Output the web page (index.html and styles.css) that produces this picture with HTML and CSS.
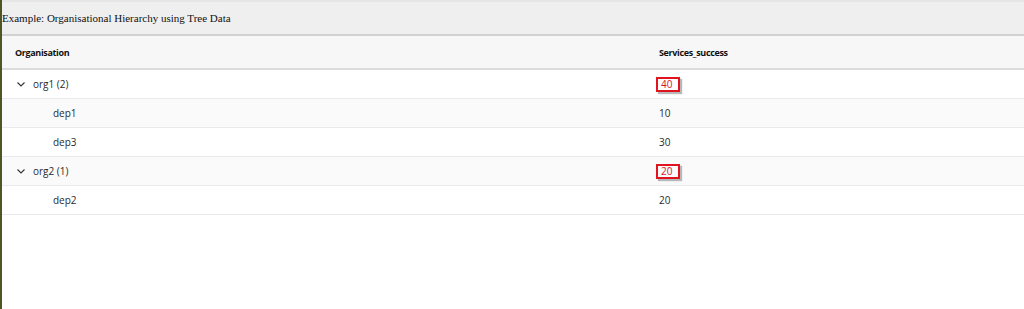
FILE: index.html
```html
<!DOCTYPE html>
<html>
<head>
<meta charset="utf-8">
<link rel="stylesheet" href="styles.css">
</head>
<body>
<div class="page">
  <div class="title">Example: Organisational Hierarchy using Tree Data</div>
  <div class="grid">
    <div class="row head">
      <div class="c1">Organisation</div>
      <div class="c2">Services_success</div>
    </div>
    <div class="row">
      <div class="c1 l0"><span class="chev"><svg width="8" height="5" viewBox="0 0 8 5"><path d="M0.5 0.5 L4 4 L7.5 0.5" fill="none" stroke="#333" stroke-width="1.1"/></svg></span>org1 (2)</div>
      <div class="c2"><span class="flag">40</span></div>
    </div>
    <div class="row alt">
      <div class="c1 l1">dep1</div>
      <div class="c2">10</div>
    </div>
    <div class="row">
      <div class="c1 l1">dep3</div>
      <div class="c2">30</div>
    </div>
    <div class="row alt">
      <div class="c1 l0"><span class="chev"><svg width="8" height="5" viewBox="0 0 8 5"><path d="M0.5 0.5 L4 4 L7.5 0.5" fill="none" stroke="#333" stroke-width="1.1"/></svg></span>org2 (1)</div>
      <div class="c2"><span class="flag">20</span></div>
    </div>
    <div class="row">
      <div class="c1 l1">dep2</div>
      <div class="c2">20</div>
    </div>
  </div>
</div>
</body>
</html>
```
FILE: styles.css
```css
html, body {
  margin: 0;
  padding: 0;
  background: #fff;
}
* {
  box-sizing: border-box;
}
.page {
  border-left: 2px solid #4f5526;
  min-height: 309px;
}
.title {
  height: 36px;
  background: #efefef;
  border-top: 2px solid #e6e6e6;
  border-bottom: 2px solid #d2d2d2;
  font-family: "Liberation Serif", serif;
  font-size: 11px;
  color: #111;
  display: flex;
  align-items: center;
}
.grid {
  font-family: "Open Sans", sans-serif;
  font-size: 10px;
  color: #2a2a2a;
}
.row {
  display: flex;
  align-items: center;
  height: 29px;
  border-bottom: 1px solid #e8eaee;
  background: #fff;
}
.row.alt {
  background: #fafafa;
}
.row.head {
  height: 34px;
  background: #f7f7f7;
  border-bottom: 2px solid #dcdcdc;
  font-weight: 700;
  font-size: 9px;
  letter-spacing: -0.35px;
  color: #111;
}
.c1 {
  width: 657px;
  padding-left: 13px;
  display: flex;
  align-items: center;
}
.c1.l0 {
  padding-left: 15px;
}
.c1.l1 {
  padding-left: 51px;
}
.chev {
  display: inline-flex;
  width: 16px;
  align-items: center;
}
.c2 {
  flex: 1;
}
.flag {
  display: inline-block;
  border: 2px solid #e0141e;
  color: #e0141e;
  padding: 0 6px 0 3px;
  line-height: 11px;
  margin-left: -3px;
  box-shadow: 2px 2px 1px #b8b8b8;
}
```
